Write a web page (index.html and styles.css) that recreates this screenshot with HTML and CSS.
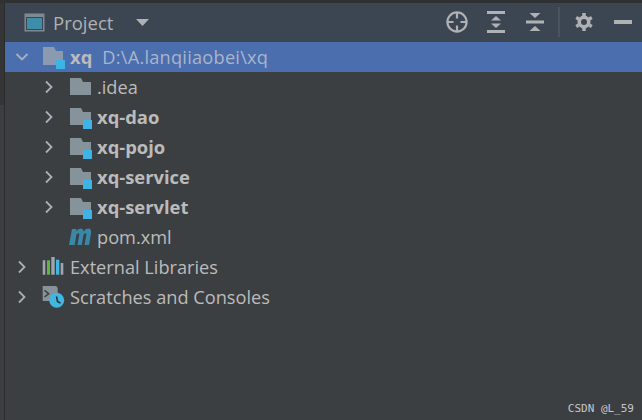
FILE: index.html
```html
<!DOCTYPE html>
<html lang="en">
<head>
<meta charset="utf-8">
<title>Project</title>
<link rel="stylesheet" href="styles.css">
</head>
<body>
<div class="app">
  <div class="strip"></div>
  <div class="panel">
    <header class="toolbar">
      <svg class="win-icon" width="22" height="22" viewBox="0 0 22 22"><rect x="0.5" y="1.5" width="20" height="18" fill="#7e8a93"/><rect x="2" y="5" width="17" height="13" fill="#3c4653"/><rect x="3" y="6" width="15" height="11" fill="#3d8eab"/></svg>
      <span class="title">Project</span>
      <svg class="drop" width="13" height="7" viewBox="0 0 13 7"><path d="M0 0h13L6.500 7z" fill="#afb1b3"/></svg>
      <div class="tools">
        <svg class="tool" width="22" height="22" viewBox="0 0 22 22" fill="none" stroke="#afb1b3" stroke-width="2.200"><circle cx="11" cy="11" r="9.600"/><path d="M11 2v5.500M11 14.500V20M2 11h5.500M14.500 11H20"/></svg>
        <svg class="tool t2" width="18" height="22" viewBox="0 0 18 22" fill="#afb1b3"><path d="M0 0h18v3H0zM0 19h18v3H0zM9 5l5 4.500H4zM9 17l-5-4.500h10z"/></svg>
        <svg class="tool t3" width="18" height="22" viewBox="0 0 18 22" fill="#afb1b3"><path d="M0 9.500h18v3H0zM3.500 2h11L9 7zM9 15l5.500 5h-11z"/></svg>
        <span class="sep"></span>
        <svg class="tool t4" width="20" height="20" viewBox="0 0 20 20"><path d="M10 3.500a6.500 6.500 0 1 0 0 13 6.500 6.500 0 0 0 0-13zm0 3.500a3 3 0 1 1 0 6 3 3 0 0 1 0-6z" fill="#afb1b3"/><path d="M10 1v3M10 16v3M2.200 5.500l2.600 1.500M15.200 13l2.600 1.500M2.200 14.500l2.600-1.500M15.200 7l2.600-1.500" stroke="#afb1b3" stroke-width="3.500"/></svg>
        <span class="dash"></span>
      </div>
    </header>
    <ul class="tree">
      <li class="row selected l1">
        <svg class="chev" width="14" height="14" viewBox="0 0 14 14"><path d="M1.500 4l5.500 5.500L12.500 4" fill="none" stroke="#a9b0ba" stroke-width="1.800"/></svg>
        <svg class="ico" width="24" height="26" viewBox="0 0 24 26"><path d="M2 3h11l2 4h7v14H2z" fill="#8a9baf"/><rect x="15" y="16" width="9" height="9" fill="#3db3e6"/></svg>
        <b class="name">xq</b><span class="path">D:\A.lanqiiaobei\xq</span>
      </li>
      <li class="row l2">
        <svg class="chev" width="14" height="14" viewBox="0 0 14 14"><path d="M4 1.500L9.500 7 4 12.500" fill="none" stroke="#a9b0ba" stroke-width="1.800"/></svg>
        <svg class="ico" width="24" height="26" viewBox="0 0 24 26"><path d="M2 4h11l2 4h8v13H2z" fill="#87939a"/></svg>
        <span>.idea</span>
      </li>
      <li class="row l2">
        <svg class="chev" width="14" height="14" viewBox="0 0 14 14"><path d="M4 1.500L9.500 7 4 12.500" fill="none" stroke="#a9b0ba" stroke-width="1.800"/></svg>
        <svg class="ico" width="24" height="26" viewBox="0 0 24 26"><path d="M2 4h11l2 4h8v13H2z" fill="#87939a"/><rect x="15" y="16" width="9" height="9" fill="#3db3e6"/></svg>
        <b class="name">xq-dao</b>
      </li>
      <li class="row l2">
        <svg class="chev" width="14" height="14" viewBox="0 0 14 14"><path d="M4 1.500L9.500 7 4 12.500" fill="none" stroke="#a9b0ba" stroke-width="1.800"/></svg>
        <svg class="ico" width="24" height="26" viewBox="0 0 24 26"><path d="M2 4h11l2 4h8v13H2z" fill="#87939a"/><rect x="15" y="16" width="9" height="9" fill="#3db3e6"/></svg>
        <b class="name">xq-pojo</b>
      </li>
      <li class="row l2">
        <svg class="chev" width="14" height="14" viewBox="0 0 14 14"><path d="M4 1.500L9.500 7 4 12.500" fill="none" stroke="#a9b0ba" stroke-width="1.800"/></svg>
        <svg class="ico" width="24" height="26" viewBox="0 0 24 26"><path d="M2 4h11l2 4h8v13H2z" fill="#87939a"/><rect x="15" y="16" width="9" height="9" fill="#3db3e6"/></svg>
        <b class="name">xq-service</b>
      </li>
      <li class="row l2">
        <svg class="chev" width="14" height="14" viewBox="0 0 14 14"><path d="M4 1.500L9.500 7 4 12.500" fill="none" stroke="#a9b0ba" stroke-width="1.800"/></svg>
        <svg class="ico" width="24" height="26" viewBox="0 0 24 26"><path d="M2 4h11l2 4h8v13H2z" fill="#87939a"/><rect x="15" y="16" width="9" height="9" fill="#3db3e6"/></svg>
        <b class="name">xq-servlet</b>
      </li>
      <li class="row l2 leaf">
        <svg class="chev" width="14" height="14" viewBox="0 0 14 14"></svg>
        <svg class="ico" width="24" height="26" viewBox="0 0 24 26"><path transform="translate(0 -3.600) scale(1 1.230)" d="M1 20L4 7h4.500l-.4 2c1.500-1.700 3.300-2.400 4.700-2.400 1.500 0 2.500.8 2.800 2.400 1.400-1.600 3.100-2.400 4.700-2.400 2.200 0 3.200 1.500 2.700 4L21 20h-4.500l1.800-8.200c.2-.9-.1-1.400-.8-1.400-.8 0-1.600.6-2.100 1.600L13.800 20H9.400l1.800-8.200c.2-.9-.1-1.400-.8-1.400-.8 0-1.600.6-2.100 1.600L6.700 20z" fill="#3a87a8"/></svg>
        <span>pom.xml</span>
      </li>
      <li class="row l1">
        <svg class="chev" width="14" height="14" viewBox="0 0 14 14"><path d="M4 1.500L9.500 7 4 12.500" fill="none" stroke="#a9b0ba" stroke-width="1.800"/></svg>
        <svg class="ico" width="24" height="26" viewBox="0 0 24 26"><path d="M1.700 6.300h2.600v14.400H1.700zM10.300 3h3.400v17.700h-3.400zM19.700 9h2.600v11.700h-2.600z" fill="#9aa7b0"/><path d="M6 6.300h3v14.400H6z" fill="#62b543"/><path d="M15 5.700h3.300v15H15z" fill="#40b6e0"/></svg>
        <span>External Libraries</span>
      </li>
      <li class="row l1">
        <svg class="chev" width="14" height="14" viewBox="0 0 14 14"><path d="M4 1.500L9.500 7 4 12.500" fill="none" stroke="#a9b0ba" stroke-width="1.800"/></svg>
        <svg class="ico" width="24" height="26" viewBox="0 0 24 26"><path d="M1.700 2h13.500l1.500 2v13H1.700z" fill="#87939a"/><path d="M3.500 6.300l4.200 3.400-4.200 3.300" fill="none" stroke="#3c3f41" stroke-width="1.500"/><circle cx="15.700" cy="16.300" r="7.500" fill="#40b6e0"/><path d="M15.500 12.500l1 5 3 1.700" fill="none" stroke="#2b2d2f" stroke-width="1.500"/></svg>
        <span>Scratches and Consoles</span>
      </li>
    </ul>
    <div class="mark">CSDN @L_59</div>
  </div>
</div>
</body>
</html>
```

FILE: styles.css
```css
* { box-sizing: border-box; }
html, body { margin: 0; padding: 0; }
body { width: 642px; height: 420px; overflow: hidden; background: #3c3f41; }
.app { display: flex; width: 642px; height: 420px; padding-top: 3px; background: #2f3133; }
.strip { width: 5px; background: linear-gradient(#333537 0 102px, #3c3f41 102px); border-right: 1px solid #2b2b2b; }
.panel { position: relative; flex: 1; display: flex; flex-direction: column; background: #3c3f41; font-family: "Open Sans", "Noto Sans", sans-serif; font-size: 18.2px; color: #bbbbbb; }
.toolbar { height: 39px; display: flex; align-items: center; background: #3c4653; padding-left: 19px; }
.win-icon { margin-right: 7px; }
.title { font-size: 18.5px; color: #afb1b3; }
.drop { margin-left: 23px; }
.tools { margin-left: auto; padding-bottom: 1px; display: flex; align-items: center; }
.tool { display: block; }
.t2 { margin-left: 19px; }
.t3 { margin-left: 21px; }
.sep { width: 2px; height: 30px; background: #4c535c; margin: 0 14px 0 14px; }
.dash { width: 18px; height: 4px; background: #afb1b3; margin: 0 10px 0 20px; }
.tree { list-style: none; margin: 0; padding: 0; }
.row { height: 30px; display: flex; align-items: center; white-space: nowrap; }
.l1 { padding-left: 10px; }
.l2 { padding-left: 37px; }
.chev { flex: none; margin-right: 12px; }
.ico { flex: none; margin-right: 5px; }
.name { font-weight: 700; font-size: 18.4px; margin-bottom: 2px; }
.selected { background: #4b6eaf; }
.path { margin-left: 10px; letter-spacing: 0.24px; color: #a9b5c9; }
.mark { position: absolute; right: 8px; bottom: 5px; font-family: "DejaVu Sans Mono", monospace; font-size: 11px; color: #c4c6c8; }
```
